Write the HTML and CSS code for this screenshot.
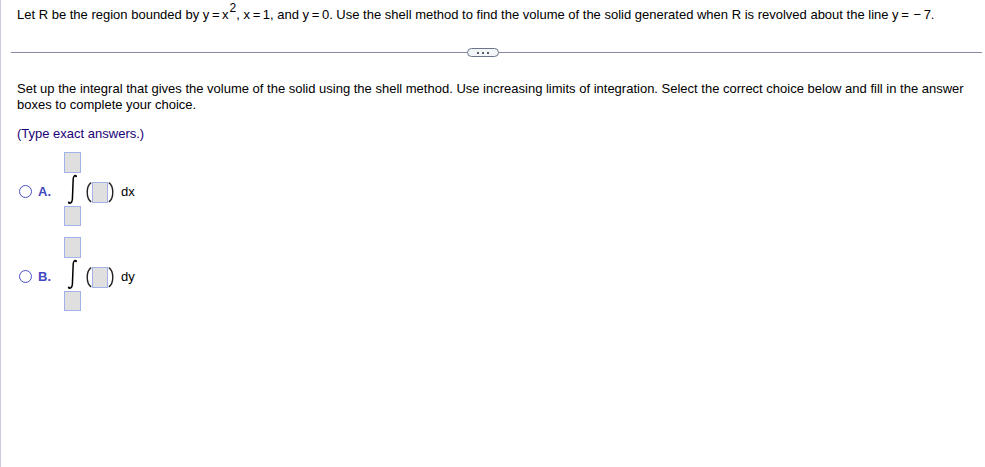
FILE: index.html
```html
<!DOCTYPE html>
<html lang="en">
<head>
    <meta charset="UTF-8">
    <title>Shell Method</title>
    <link rel="stylesheet" href="styles.css">
</head>
<body>
    <div class="question">
        <p class="problem">Let R be the region bounded by <span class="math">y = x<sup>2</sup></span>, <span class="math">x = 1</span>, and <span class="math">y = 0</span>. Use the shell method to find the volume of the solid generated when R is revolved about the line <span class="math">y = <span class="minus">−</span> 7</span>.</p>

        <div class="divider">
            <button class="more-btn" aria-label="More"><i></i><i></i><i></i></button>
        </div>

        <p class="prompt">Set up the integral that gives the volume of the solid using the shell method. Use increasing limits of integration. Select the correct choice below and fill in the answer<br>boxes to complete your choice.</p>
        <p class="hint">(Type exact answers.)</p>

        <div class="choice">
            <span class="radio"></span>
            <span class="letter">A.</span>
            <div class="integral">
                <span class="box upper"></span>
                <svg class="int-sign" width="11" height="31" viewBox="0 0 11 31">
                    <path d="M9.2 1.9C7.8 .9 6.4 2 6.2 5L5.4 25.2C5.1 28.6 3.4 29.8 1.6 28.8" fill="none" stroke="#000" stroke-width="1.5"/>
                    <circle cx="9" cy="2.3" r="1"/>
                    <circle cx="1.8" cy="28.5" r="1"/>
                </svg>
                <span class="box lower"></span>
            </div>
            <div class="integrand">
                <svg width="6" height="21" viewBox="0 0 6 21"><path d="M5.2.6C-.1 4-.1 16.5 5.2 19.9" fill="none" stroke="#222" stroke-width="1.4"/></svg>
                <span class="box inner"></span>
                <svg width="6" height="21" viewBox="0 0 6 21"><path d="M.8.6C6.1 4 6.1 16.5 .8 19.9" fill="none" stroke="#222" stroke-width="1.4"/></svg>
            </div>
            <span class="variable">dx</span>
        </div>

        <div class="choice">
            <span class="radio"></span>
            <span class="letter">B.</span>
            <div class="integral">
                <span class="box upper"></span>
                <svg class="int-sign" width="11" height="31" viewBox="0 0 11 31">
                    <path d="M9.2 1.9C7.8 .9 6.4 2 6.2 5L5.4 25.2C5.1 28.6 3.4 29.8 1.6 28.8" fill="none" stroke="#000" stroke-width="1.5"/>
                    <circle cx="9" cy="2.3" r="1"/>
                    <circle cx="1.8" cy="28.5" r="1"/>
                </svg>
                <span class="box lower"></span>
            </div>
            <div class="integrand">
                <svg width="6" height="21" viewBox="0 0 6 21"><path d="M5.2.6C-.1 4-.1 16.5 5.2 19.9" fill="none" stroke="#222" stroke-width="1.4"/></svg>
                <span class="box inner"></span>
                <svg width="6" height="21" viewBox="0 0 6 21"><path d="M.8.6C6.1 4 6.1 16.5 .8 19.9" fill="none" stroke="#222" stroke-width="1.4"/></svg>
            </div>
            <span class="variable">dy</span>
        </div>
    </div>
</body>
</html>
```

FILE: styles.css
```css
* {
    margin: 0;
    padding: 0;
    box-sizing: border-box;
}

body {
    background: #fff;
    color: #000;
    font-family: "Liberation Sans", Arial, sans-serif;
    font-size: 13px;
    line-height: 16px;
}

.question {
    min-height: 100vh;
    padding-top: 7px;
    border-left: 1px solid #c9cbdf;
}

.problem,
.prompt,
.hint {
    padding-left: 16px;
    white-space: nowrap;
}

.math {
    word-spacing: -1px;
}

.math sup {
    margin-left: 1px;
    font-size: 12px;
    line-height: 0;
    vertical-align: 7px;
}

.minus {
    margin-left: 2px;
}

.divider {
    display: flex;
    align-items: center;
    margin: 24px 3px 0 10px;
    height: 11px;
}

.divider::before,
.divider::after {
    content: "";
    height: 1px;
    background: #8589a3;
}

.divider::before {
    width: 456px;
}

.divider::after {
    flex: 1;
}

.more-btn {
    display: flex;
    align-items: center;
    justify-content: center;
    gap: 3px;
    width: 32px;
    height: 9px;
    border: 1px solid #6b7488;
    border-radius: 5px;
    background: #f3f6f8;
}

.more-btn i {
    width: 2px;
    height: 2px;
    background: #555f6b;
}

.prompt {
    margin-top: 23px;
}

.hint {
    margin: 13px 0 10px;
    color: #1a0078;
}

.choice {
    display: flex;
    align-items: center;
    height: 74px;
    margin: 0 0 11px 18px;
}

.radio {
    width: 13px;
    height: 13px;
    margin-top: 5px;
    border: 1px solid #4a4fc4;
    border-radius: 50%;
}

.letter {
    width: 26px;
    margin: 6px 0 0 6px;
    color: #4348c0;
    font-weight: bold;
}

.integral {
    display: flex;
    flex-direction: column;
    width: 17px;
}

.box {
    width: 17px;
    height: 21px;
    border: 1px solid #a3b1ea;
    background: #dfdfdf;
}

.int-sign {
    margin: 1px 0 1px 3px;
}

.lower {
    height: 20px;
}

.integrand {
    display: flex;
    margin: 7px 0 0 5px;
}

.inner {
    width: 16px;
}

.variable {
    margin: 6px 0 0 7px;
}
```
